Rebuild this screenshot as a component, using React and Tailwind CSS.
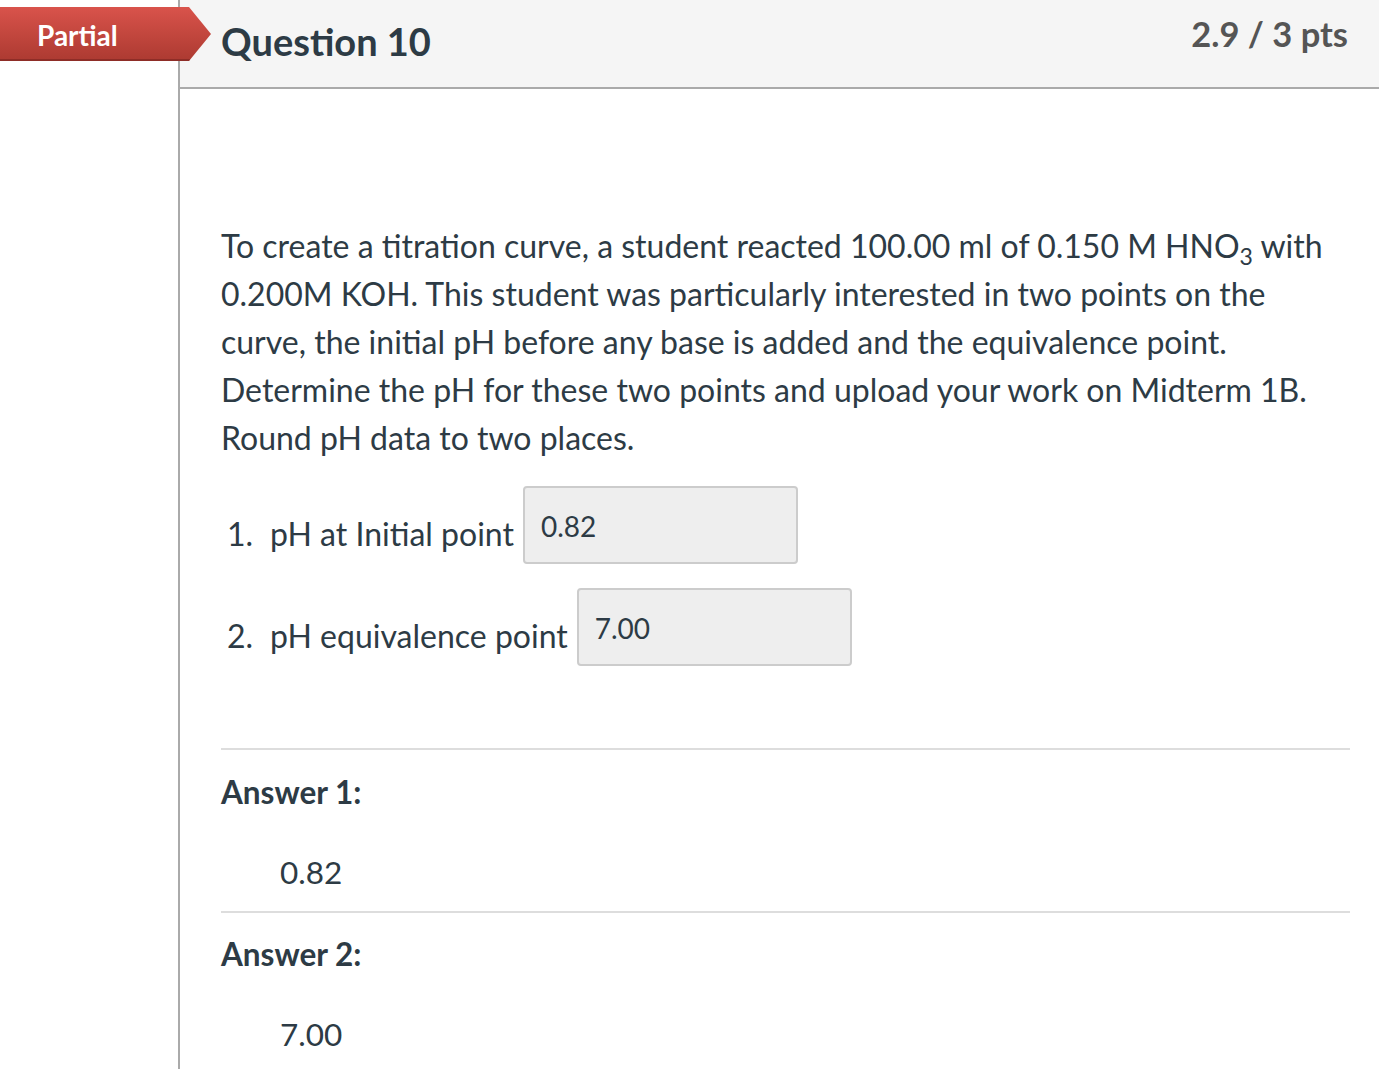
import React from "react";

export default function App() {
  return (
    <div className="relative flex min-h-[1069px] bg-white text-[#2d3b45]" style={{ fontFamily: "Lato, 'Liberation Sans', sans-serif" }}>
      <div className="w-[178px] shrink-0" />
      <div className="flex-1 border-l-2 border-[#aaaaaa]">
        <div className="flex h-[89px] items-start justify-between border-b-2 border-[#aaaaaa] bg-[#f5f5f5] pl-[41px] pr-[31px]">
          <h2 className="mt-[19px] text-[38px] font-bold leading-[44px] text-[#2d3b45]">Question 10</h2>
          <div className="mt-[12px] text-[34.5px] font-bold leading-[44px] text-[#555555]">2.9 / 3 pts</div>
        </div>
        <div className="pl-[41px] pr-[29px]">
          <p className="mt-[133px] text-[32px] leading-[48px]">
            To create a titration curve, a student reacted 100.00 ml of 0.150 M HNO<span className="relative top-[7px] text-[23px] leading-none">3</span> with 0.200M KOH. This student was particularly interested in two points on the curve, the initial pH before any base is added and the equivalence point. Determine the pH for these two points and upload your work on Midterm 1B. Round pH data to two places.
          </p>
          <ol className="mt-[24px] text-[32px] leading-[48px]">
            <li className="flex items-start">
              <span className="mt-[24px] w-[49px] pl-[6px]">1.</span>
              <span className="mt-[24px]">pH at Initial point</span>
              <div className="ml-[9px] h-[78px] w-[275px] rounded-[4px] border-2 border-[#cccccc] bg-[#eeeeee] px-[16px] pt-[23px] text-[28px] leading-[30px]">0.82</div>
            </li>
            <li className="mt-[24px] flex items-start">
              <span className="mt-[24px] w-[49px] pl-[6px]">2.</span>
              <span className="mt-[24px]">pH equivalence point</span>
              <div className="ml-[9px] h-[78px] w-[275px] rounded-[4px] border-2 border-[#cccccc] bg-[#eeeeee] px-[16px] pt-[23px] text-[28px] leading-[30px]">7.00</div>
            </li>
          </ol>
          <div className="mt-[82px] border-t-2 border-[#dddddd]" />
          <div className="pt-[24px] text-[31.5px] font-bold leading-[36px]">Answer 1:</div>
          <div className="mt-[44px] pl-[59px] text-[31.5px] leading-[36px]">0.82</div>
          <div className="mt-[21px] border-t-2 border-[#dddddd]" />
          <div className="pt-[23px] text-[31.5px] font-bold leading-[36px]">Answer 2:</div>
          <div className="mt-[44px] pl-[59px] text-[31.5px] leading-[36px]">7.00</div>
        </div>
      </div>
      <div className="absolute left-0 top-[7px] h-[54px] w-[212px]">
        <svg width="212" height="54" viewBox="0 0 212 54" className="absolute inset-0">
          <defs>
            <linearGradient id="rg" x1="0" y1="0" x2="0" y2="1">
              <stop offset="0" stopColor="#d9534b" />
              <stop offset="1" stopColor="#ac3a31" />
            </linearGradient>
          </defs>
          <polygon points="0,0 189,0 211,27 189,54 0,54" fill="url(#rg)" />
          <polygon points="0,52 190,52 189,54 0,54" fill="#8e2d27" />
        </svg>
        <span className="absolute left-[37px] top-[12px] text-[28px] font-bold leading-[32px] text-white">Partial</span>
      </div>
    </div>
  );
}
